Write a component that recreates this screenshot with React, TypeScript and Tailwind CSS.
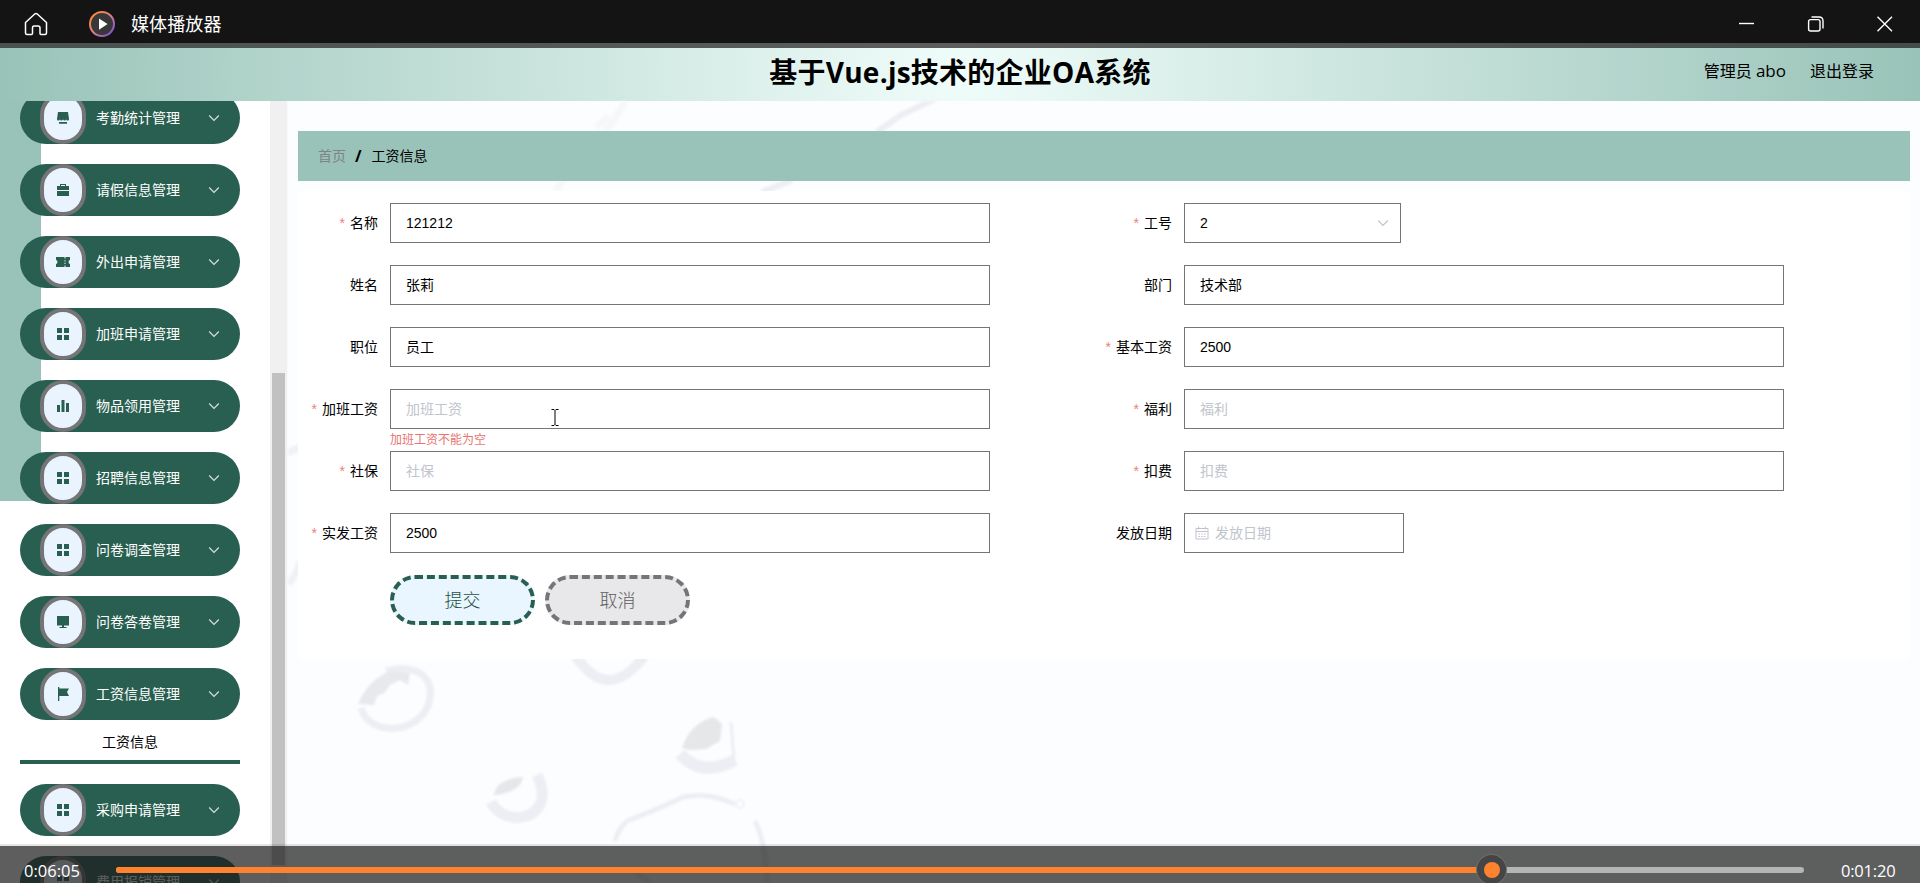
import React from "react";

type IconName = "shop" | "case" | "ticket" | "grid" | "bars" | "screen" | "flag";

const MENU: { label: string; icon: IconName; sub?: string }[] = [
  { label: "考勤统计管理", icon: "shop" },
  { label: "请假信息管理", icon: "case" },
  { label: "外出申请管理", icon: "ticket" },
  { label: "加班申请管理", icon: "grid" },
  { label: "物品领用管理", icon: "bars" },
  { label: "招聘信息管理", icon: "grid" },
  { label: "问卷调查管理", icon: "grid" },
  { label: "问卷答卷管理", icon: "screen" },
  { label: "工资信息管理", icon: "flag", sub: "工资信息" },
  { label: "采购申请管理", icon: "grid" },
  { label: "费用报销管理", icon: "grid" },
];

const ICON_PATHS: Record<IconName, string> = {
  shop: "M3 2h10l1 7c0 1-.6 1.6-1.4 1.6-.8 0-1.300-.5-1.500-1-.2.500-.800 1-1.500 1s-1.300-.5-1.600-1c-.3.500-.8 1-1.600 1s-1.300-.5-1.500-1c-.3.500-.8 1-1.500 1C2.500 10.600 2 10 2 9zM4 12h8v1.800H4z",
  case: "M5 4V2h6v2h3v4H2V4zM6 3v1h4V3zM2 9h12v5H2z",
  ticket: "M1 3h8.500v1.500h1V3H15v2.800c-2 .9-2 3.500 0 4.400V13h-4.500v-1.500h-1V13H1v-2.800c2-.9 2-3.500 0-4.400zM9.500 6.200v1.300h1V6.200zm0 2.600v1.300h1V8.800z",
  grid: "M2 2h5v5H2zM9 2h5v5H9zM2 9h5v5H2zM9 9h5v5H9z",
  bars: "M2 7h3v7H2zM6.500 2h3v12h-3zM11 5h3v9h-3z",
  screen: "M2 2h12v9.500H2zM7 11.500h2V13h2.500v1h-7v-1H7z",
  flag: "M3 1h1.300v1.500H14l-2 3.500 2 4H4.300v5H3z",
};

function MenuIcon({ name }: { name: IconName }) {
  return (
    <svg viewBox="0 0 16 16" className="size-4" fill="#295f50" fillRule="evenodd">
      <path d={ICON_PATHS[name]} />
    </svg>
  );
}

function Chevron({ className }: { className: string }) {
  return (
    <svg viewBox="0 0 12 8" className={className} fill="none" strokeWidth="1.200">
      <path d="M1.200 1.500 6 6.300l4.800-4.800" />
    </svg>
  );
}

function Sidebar() {
  return (
    <aside className="flex w-[288px] shrink-0 overflow-hidden bg-white">
      <div className="relative w-[270px]">
        <div className="absolute top-0 left-0 h-[400px] w-[41px] bg-[#99c3b8]" />
        <nav className="relative -mt-[9px] flex w-[240px] flex-col gap-5 pl-5">
          {MENU.map((m) => (
            <div key={m.label}>
              <div className="flex h-[52px] items-center rounded-[26px] bg-[#295f50] pl-5">
                <span className="flex h-[52px] w-[46px] items-center justify-center rounded-[30px] border-4 border-[#757476] bg-[#eaf4ff]">
                  <MenuIcon name={m.icon} />
                </span>
                <span className="ml-[10px] text-sm text-white">{m.label}</span>
                <Chevron className="ml-[28px] h-2 w-3 stroke-[#d5e2de]" />
              </div>
              {m.sub && (
                <div className="flex h-11 items-center justify-center border-b-4 border-[#295f50] pt-1 text-sm text-black">
                  {m.sub}
                </div>
              )}
            </div>
          ))}
        </nav>
      </div>
      <div className="w-[17px] bg-[#f0f0f0] px-[2px] pt-[272px]">
        <div className="h-[492px] bg-[#c1c1c1]" />
      </div>
      <div className="w-px bg-[#fafafc]" />
    </aside>
  );
}

function Sketch() {
  return (
    <svg
      viewBox="288 101 1632 782"
      className="absolute inset-0 h-[782px] w-[1632px] blur-[0.8px]"
      fill="none"
      stroke="#eceef3"
      strokeWidth="7"
    >
      <path d="M877 132l24-17 34-16M762 192l30-12" strokeWidth="6" />
      <path d="M605 131q14-17 20-30M596 128l12-12M556 191l8-12" stroke="#f7f7f9" strokeWidth="7" />
      <path d="M288 453l12-6M288 584q8-8 12-22" stroke="#f0f1f5" />
      <path d="M361 708c8 28 54 27 67-2 9-28-10-43-42-35" />
      <path d="M358 704q10-24 32-33l20 2-2 12-8-5-10 5-6 8-7 3-3 9z" fill="#e8e9ed" stroke="none" />
      <path d="M573 652q35 56 74 0" strokeWidth="10" />
      <path d="M682 748q8-25 32-31l8 7-2 17-14 8-16 1z" fill="#e6e7e9" stroke="none" />
      <path d="M680 754q22 24 55 6" strokeWidth="12" />
      <path d="M731 722l3 38" strokeWidth="3" />
      <path d="M494 793q5-15 29-16-3 16-29 18z" fill="#e5e7ea" stroke="none" />
      <path d="M491 802c12 24 54 20 51-11q-1-9-5-16" strokeWidth="11" />
      <path d="M615 841q3-12 12-20 36-14 56-24 20-4 38 2l14 5M755 821q11 22 12 62M636 872l14 11" strokeWidth="5" />
      <circle cx="740" cy="804" r="4" strokeWidth="1.500" />
    </svg>
  );
}

type FieldProps = {
  label: string;
  required?: boolean;
  value?: string;
  placeholder?: string;
  error?: string;
  kind?: "select" | "date";
};

const ROWS: [FieldProps, FieldProps][] = [
  [{ label: "名称", required: true, value: "121212" }, { label: "工号", required: true, value: "2", kind: "select" }],
  [{ label: "姓名", value: "张莉" }, { label: "部门", value: "技术部" }],
  [{ label: "职位", value: "员工" }, { label: "基本工资", required: true, value: "2500" }],
  [
    { label: "加班工资", required: true, placeholder: "加班工资", error: "加班工资不能为空" },
    { label: "福利", required: true, placeholder: "福利" },
  ],
  [{ label: "社保", required: true, placeholder: "社保" }, { label: "扣费", required: true, placeholder: "扣费" }],
  [{ label: "实发工资", required: true, value: "2500" }, { label: "发放日期", placeholder: "发放日期", kind: "date" }],
];

function CalendarIcon() {
  return (
    <svg viewBox="0 0 14 14" className="mr-[6px] size-[14px]" fill="none" stroke="#c0c4cc">
      <path d="M1 2.500h12v10.500H1zM1 5.500h12M3.700.5v3M10.300.5v3M3.500 8h1.500M6.300 8h1.500M9 8h1.500M3.500 10.500h1.500M6.300 10.500h1.500M9 10.500h1.500" />
    </svg>
  );
}

function Field({ label, required, value, placeholder, error, kind }: FieldProps) {
  const width = kind === "select" ? "w-[217px]" : kind === "date" ? "w-[220px]" : "w-[600px]";
  const padding = kind === "date" ? "pl-[10px]" : "pl-[15px]";
  return (
    <div className="flex h-10 w-[794px]">
      <div className="flex w-20 shrink-0 items-center justify-end pr-3 text-sm whitespace-nowrap text-black">
        {required && <span className="mr-[5px] text-[#ec8080]">*</span>}
        {label}
      </div>
      <div className="relative">
        <div className={`flex h-10 items-center border border-[#757476] bg-white text-sm ${width} ${padding}`}>
          {kind === "date" && <CalendarIcon />}
          <span className={value ? "text-black" : "text-[#c0c4cc]"}>{value ?? placeholder}</span>
          {kind === "select" && <Chevron className="mr-[11px] ml-auto h-2 w-3 stroke-[#c0c4cc]" />}
        </div>
        {error && <div className="absolute top-[43px] left-0 text-xs leading-4 text-[#e8736f]">{error}</div>}
      </div>
    </div>
  );
}

function Content() {
  return (
    <main className="relative flex-1 bg-[#fcfdff]">
      <Sketch />
      <div className="relative pt-[30px] pr-[10px] pl-[10px]">
        <div className="flex h-[50px] items-center bg-[#99c3b8] pl-5 text-sm">
          <span className="text-[#808285]">首页</span>
          <span className="mr-[10px] ml-[9px] font-['Open_Sans'] text-base font-bold text-black">/</span>
          <span className="text-black">工资信息</span>
        </div>
        <div className="mt-[10px] h-[468px] bg-white pt-3 pl-3">
          <div className="flex flex-col gap-[22px]">
            {ROWS.map(([a, b]) => (
              <div key={a.label} className="flex">
                <Field {...a} />
                <Field {...b} />
              </div>
            ))}
          </div>
          <div className="mt-[22px] flex gap-[10px] pl-20">
            <button className="h-[50px] w-[145px] rounded-[30px] border-4 border-dashed border-[#295f50] bg-[#eaf6ff] pt-px text-lg font-light text-[#1d5243]">
              提交
            </button>
            <button className="h-[50px] w-[145px] rounded-[30px] border-4 border-dashed border-[#757476] bg-[#e8e7e9] pt-px text-lg font-light text-[#5c5b5d]">
              取消
            </button>
          </div>
        </div>
      </div>
      <svg viewBox="0 0 8 17" className="absolute top-[308px] left-[263px] h-[17px] w-2" fill="none" stroke="#000">
        <path d="M.5.500H3l1 1 1-1h2.500M4 1.500v14M.5 16.500H3l1-1 1 1h2.500" />
      </svg>
    </main>
  );
}

function TitleBar() {
  return (
    <div className="flex h-[43px] shrink-0 items-center bg-[#141414] text-white">
      <svg viewBox="0 0 24 24" className="mt-1 ml-6 size-6" fill="none" stroke="#fff" strokeWidth="1.500">
        <path d="M1.500 10.500 11 1.800q1-.8 2 0l9.500 8.700V21q0 1.500-1.500 1.500h-4q-1 0-1-1V16q0-2-2-2h-4q-1.500 0-1.500 2v5.500q0 1-1 1H3Q1.500 22.500 1.500 21z" />
      </svg>
      <svg viewBox="0 0 26 26" className="mt-[5px] ml-[41px] size-[26px]">
        <defs>
          <linearGradient id="ring" x1="0" y1="0" x2="1" y2="1">
            <stop offset="0.100" stopColor="#ff8a35" />
            <stop offset="0.500" stopColor="#d98087" />
            <stop offset="0.900" stopColor="#8153cf" />
          </linearGradient>
        </defs>
        <circle cx="13" cy="13" r="12" fill="#383838" stroke="url(#ring)" strokeWidth="2" />
        <path d="M10 7.500v11.200l8.600-5.600z" fill="#fff" />
      </svg>
      <span className="mt-[7px] ml-4 text-lg tracking-[0.1px]">媒体播放器</span>
      <svg viewBox="0 0 154 16" className="mt-1 mr-[27px] ml-auto h-4 w-[154px]" fill="none" stroke="#fff" strokeWidth="1.400">
        <path d="M0 7.500h15" />
        <rect x="69.600" y="3.600" width="11.400" height="11.400" rx="2" />
        <path d="M72.500 1h7.500q4 0 4 4v7.500" />
        <path d="m138.500.8 14.500 14.500m0-14.500-14.500 14.500" />
      </svg>
    </div>
  );
}

function PlayerBar() {
  return (
    <div className="absolute bottom-0 left-0 flex h-[39px] w-full border-t-2 border-black/10 bg-[#1c1c1c]/[0.71] bg-clip-padding text-[16.5px] text-white">
      <span className="mt-[11px] ml-6 w-[92px] leading-7">0:06:05</span>
      <div className="relative mt-[21px] flex h-[6px] w-[1688px] rounded-full bg-[#b4b6b5]">
        <div className="h-[6px] w-[1376px] rounded-l-full bg-[#ff832f]" />
        <div className="absolute -top-[12px] left-[1361px] flex size-[29px] items-center justify-center rounded-full bg-[#454545] ring-1 ring-[#6c6e6d]">
          <div className="size-4 rounded-full bg-[#ff832f]" />
        </div>
      </div>
      <span className="mt-[11px] ml-[37px] leading-7 tracking-[-0.2px]">0:01:20</span>
    </div>
  );
}

export default function App() {
  return (
    <div className="relative flex h-[883px] w-[1920px] flex-col overflow-hidden bg-white font-['Liberation_Sans','Noto_Sans_CJK_SC',sans-serif]">
      <TitleBar />
      <header className="relative flex h-[58px] shrink-0 items-center justify-center bg-[radial-gradient(circle_at_center,#f0fdfa_0,#99c3b8_960px)] font-['Open_Sans','Noto_Sans_CJK_SC',sans-serif] text-black">
        <div className="absolute top-0 left-0 h-[5px] w-full bg-[linear-gradient(90deg,#48524f,#5c5d5e,#434d4b)]" />
        <h1 className="text-[28px] font-bold tracking-[0.25px]">基于Vue.js技术的企业OA系统</h1>
        <div className="absolute top-4 right-[46px] flex gap-6 text-base leading-6">
          <span>
            管理员 <span className="text-[17px]">abo</span>
          </span>
          <span>退出登录</span>
        </div>
      </header>
      <div className="flex min-h-0 flex-1">
        <Sidebar />
        <Content />
      </div>
      <div className="font-['Open_Sans',sans-serif]">
        <PlayerBar />
      </div>
    </div>
  );
}
